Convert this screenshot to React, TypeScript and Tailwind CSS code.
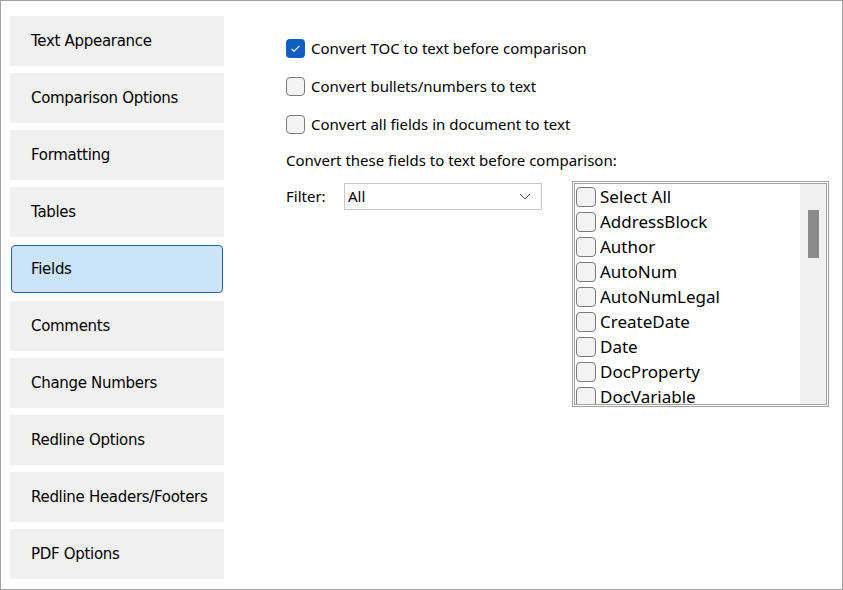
import React from "react";

const navItems = [
  "Text Appearance",
  "Comparison Options",
  "Formatting",
  "Tables",
  "Fields",
  "Comments",
  "Change Numbers",
  "Redline Options",
  "Redline Headers/Footers",
  "PDF Options",
];

const fields = [
  "Select All",
  "AddressBlock",
  "Author",
  "AutoNum",
  "AutoNumLegal",
  "CreateDate",
  "Date",
  "DocProperty",
  "DocVariable",
];

const sideFont = { fontFamily: '"DejaVu Sans", Tahoma, sans-serif' };
const mainFont = { fontFamily: '"Noto Sans", "Open Sans", sans-serif' };

function Check({ checked, size = "w-[19px] h-[19px]" }: { checked?: boolean; size?: string }) {
  if (checked) {
    return (
      <span className={`${size} shrink-0 rounded-[4px] bg-[#0f5fc2] flex items-center justify-center`}>
        <svg width="11" height="9" viewBox="0 0 11 9" fill="none">
          <path d="M1.5 4.8 L4 7.2 L9.5 1.8" stroke="white" strokeWidth="1.1" />
        </svg>
      </span>
    );
  }
  return <span className={`${size} shrink-0 rounded-[4px] border border-[#7a7a7a] bg-[#f3f3f3]`} />;
}

export default function App() {
  return (
    <div className="w-[843px] h-[590px] border border-[#a0a0a0] bg-white flex text-black overflow-hidden">
      <div className="w-[214px] ml-[9px] mt-[15px] flex flex-col gap-[7px]" style={sideFont}>
        {navItems.map((t) =>
          t === "Fields" ? (
            <div key={t} className="h-[50px] p-[1px]">
              <div className="h-full flex items-center pl-[19px] bg-[#cce4f7] border border-[#1f5fa6] rounded-[4px] text-[15px] tracking-[-0.3px]">
                {t}
              </div>
            </div>
          ) : (
            <div key={t} className="h-[50px] flex items-center pl-[21px] bg-[#f0f0f0] text-[15px] tracking-[-0.3px]">
              {t}
            </div>
          )
        )}
      </div>
      <div className="ml-[62px] mt-[37px] flex flex-col text-[15px]" style={mainFont}>
        <div className="flex items-center gap-[6px] h-[21px]">
          <Check checked />
          <span>Convert TOC to text before comparison</span>
        </div>
        <div className="flex items-center gap-[6px] h-[21px] mt-[17px]">
          <Check />
          <span>Convert bullets/numbers to text</span>
        </div>
        <div className="flex items-center gap-[6px] h-[21px] mt-[17px]">
          <Check />
          <span>Convert all fields in document to text</span>
        </div>
        <div className="h-[21px] mt-[15px] flex items-center">Convert these fields to text before comparison:</div>
        <div className="flex mt-[10px]">
          <div className="flex items-start pt-[2px]">
            <span className="w-[58px] h-[27px] flex items-center">Filter:</span>
            <div className="w-[198px] h-[27px] border border-[#c8c8c8] bg-white flex items-center justify-between pl-[3px] pr-[10px]">
              <span>All</span>
              <svg width="12" height="7" viewBox="0 0 12 7" fill="none">
                <path d="M1 1 L6 6 L11 1" stroke="#555" strokeWidth="1" />
              </svg>
            </div>
          </div>
          <div className="ml-[30px] w-[257px] h-[226px] border border-[#a0a0a0] p-[1px]">
            <div className="w-full h-full border border-[#a0a0a0] flex overflow-hidden">
              <div className="flex-1 flex flex-col pl-[1px] text-[17px] overflow-hidden">
                {fields.map((f) => (
                  <div key={f} className="h-[25px] flex items-center gap-[4px] shrink-0">
                    <Check size="w-[20px] h-[20px]" />
                    <span>{f}</span>
                  </div>
                ))}
              </div>
              <div className="w-[26px] bg-[#f0f0f0] flex justify-center pt-[26px]">
                <div className="w-[11px] h-[48px] bg-[#8a8a8a]" />
              </div>
            </div>
          </div>
        </div>
      </div>
    </div>
  );
}
